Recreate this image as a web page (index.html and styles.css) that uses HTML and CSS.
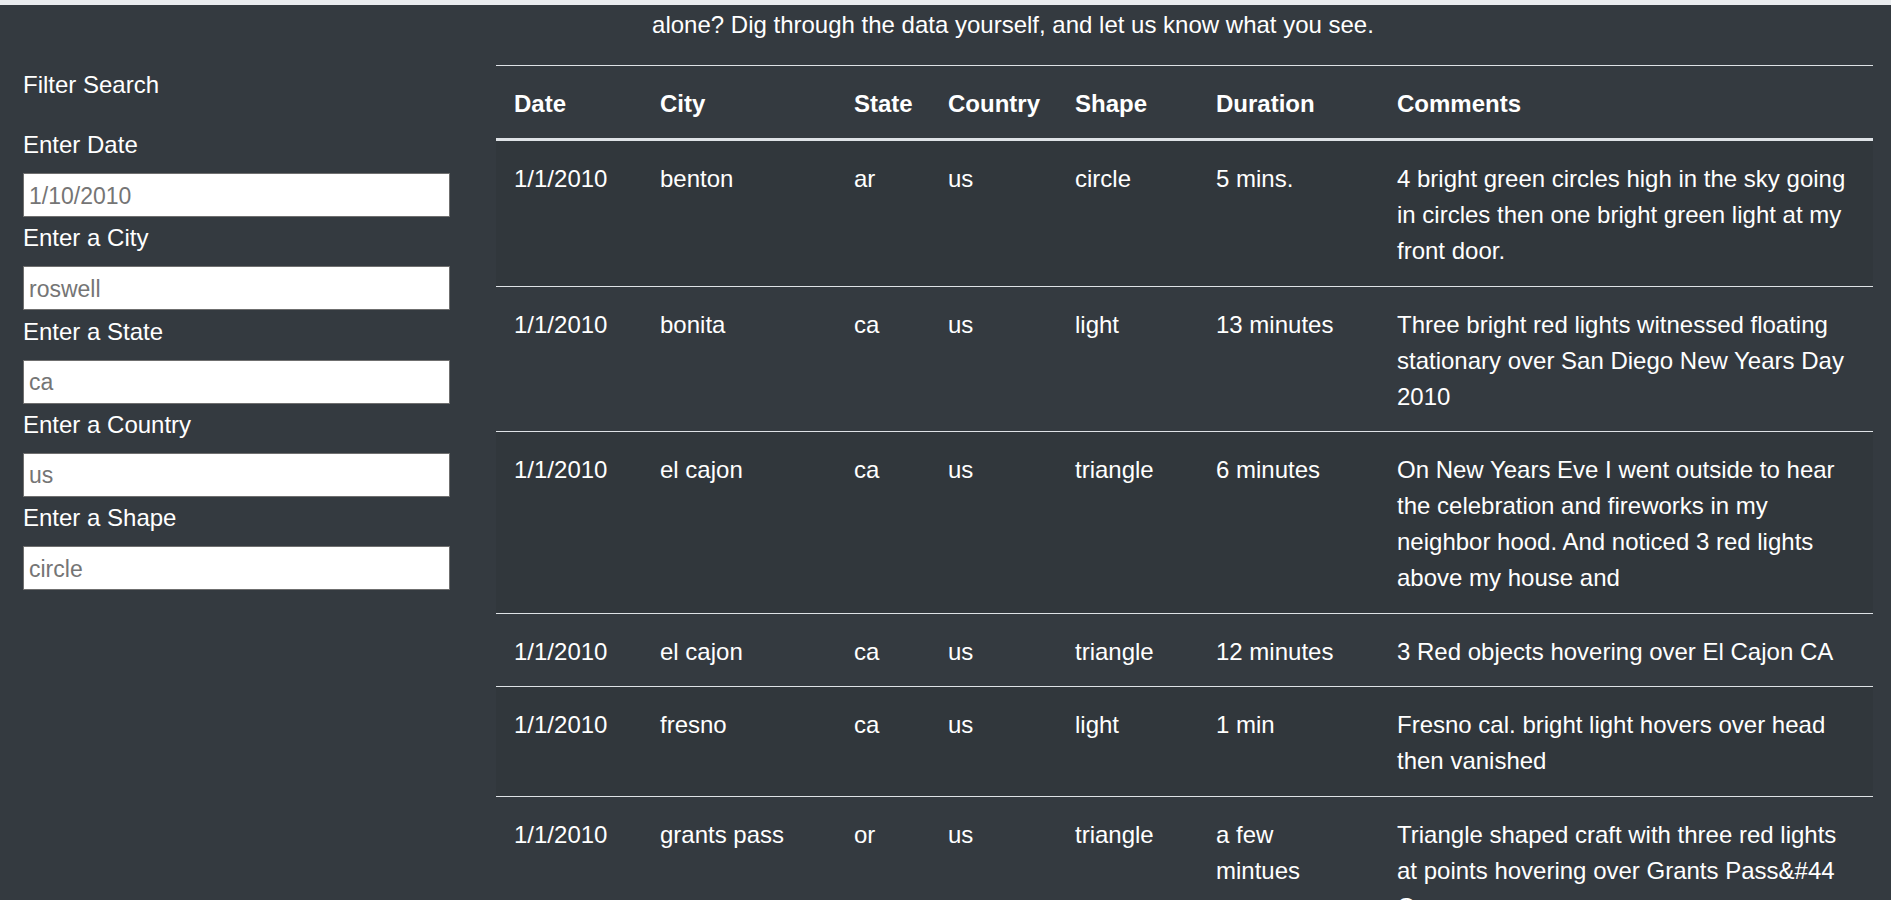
FILE: index.html
```html
<!DOCTYPE html>
<html lang="en">
<head>
<meta charset="utf-8">
<title>UFO Sightings</title>
<link rel="stylesheet" href="styles.css">
</head>
<body>
<div class="topbar"></div>
<p class="intro">alone? Dig through the data yourself, and let us know what you see.</p>
<div class="layout">
  <aside class="filters">
    <div class="filter-title">Filter Search</div>
    <form class="filter-form">
      <label class="field-label" for="datetime">Enter Date</label>
      <input class="field-input" id="datetime" type="text" placeholder="1/10/2010">
      <label class="field-label" for="city">Enter a City</label>
      <input class="field-input" id="city" type="text" placeholder="roswell">
      <label class="field-label" for="state">Enter a State</label>
      <input class="field-input" id="state" type="text" placeholder="ca">
      <label class="field-label" for="country">Enter a Country</label>
      <input class="field-input" id="country" type="text" placeholder="us">
      <label class="field-label" for="shape">Enter a Shape</label>
      <input class="field-input" id="shape" type="text" placeholder="circle">
    </form>
  </aside>
  <main class="results">
    <table class="ufo-table">
      <colgroup>
        <col class="col-date">
        <col class="col-city">
        <col class="col-state">
        <col class="col-country">
        <col class="col-shape">
        <col class="col-duration">
        <col class="col-comments">
      </colgroup>
      <thead>
        <tr>
          <th>Date</th>
          <th>City</th>
          <th>State</th>
          <th>Country</th>
          <th>Shape</th>
          <th>Duration</th>
          <th>Comments</th>
        </tr>
      </thead>
      <tbody>
        <tr>
          <td>1/1/2010</td><td>benton</td><td>ar</td><td>us</td><td>circle</td><td>5 mins.</td>
          <td>4 bright green circles high in the sky going in circles then one bright green light at my front door.</td>
        </tr>
        <tr>
          <td>1/1/2010</td><td>bonita</td><td>ca</td><td>us</td><td>light</td><td>13 minutes</td>
          <td>Three bright red lights witnessed floating stationary over San Diego New Years Day 2010</td>
        </tr>
        <tr>
          <td>1/1/2010</td><td>el cajon</td><td>ca</td><td>us</td><td>triangle</td><td>6 minutes</td>
          <td>On New Years Eve I went outside to hear the celebration and fireworks in my neighbor hood. And noticed 3 red lights above my house and</td>
        </tr>
        <tr>
          <td>1/1/2010</td><td>el cajon</td><td>ca</td><td>us</td><td>triangle</td><td>12 minutes</td>
          <td>3 Red objects hovering over El Cajon CA</td>
        </tr>
        <tr>
          <td>1/1/2010</td><td>fresno</td><td>ca</td><td>us</td><td>light</td><td>1 min</td>
          <td>Fresno cal. bright light hovers over head then vanished</td>
        </tr>
        <tr>
          <td>1/1/2010</td><td>grants pass</td><td>or</td><td>us</td><td>triangle</td><td>a few mintues</td>
          <td>Triangle shaped craft with three red lights at points hovering over Grants Pass&amp;#44 Oregon</td>
        </tr>
      </tbody>
    </table>
  </main>
</div>
</body>
</html>
```

FILE: styles.css
```css
html, body {
  margin: 0;
  padding: 0;
}

body {
  background: #343a40;
  color: #ffffff;
  font-family: "Liberation Sans", Arial, sans-serif;
  font-size: 24px;
  line-height: 36px;
  overflow: hidden;
}

.topbar {
  height: 5px;
  background: #e9ecef;
}

.intro {
  margin: 0 0 24px 0;
  padding: 2px 0 0 135px;
  height: 34px;
  text-align: center;
}

.layout {
  display: grid;
  grid-template-columns: 473px 1fr;
}

.filters {
  padding: 0 23px;
}

.filter-title {
  padding-top: 2px;
  height: 34px;
  margin-bottom: 24px;
}

.filter-form {
  display: flex;
  flex-direction: column;
}

.field-label {
  display: block;
  height: 34px;
  padding-top: 2px;
  margin-bottom: 12px;
}

.field-input {
  box-sizing: border-box;
  height: 44px;
  margin: 0 0 1.25px 0;
  padding: 2px 5px 0 5px;
  border: 1px solid #6f6f6f;
  border-radius: 0;
  background: #ffffff;
  font-family: "Liberation Sans", Arial, sans-serif;
  font-size: 23px;
  color: #333;
  outline: none;
}

.field-input::placeholder {
  color: #757575;
}

.results {
  padding: 0 18px 0 23px;
}

.ufo-table {
  width: 1377px;
  table-layout: fixed;
  border-collapse: separate;
  border-spacing: 0;
}

.col-date { width: 146px; }
.col-city { width: 194px; }
.col-state { width: 94px; }
.col-country { width: 127px; }
.col-shape { width: 141px; }
.col-duration { width: 181px; }
.col-comments { width: 494px; }

.ufo-table th,
.ufo-table td {
  text-align: left;
  vertical-align: top;
  padding: 20px 18px 16.5px 18px;
}

.ufo-table th {
  font-weight: bold;
  padding-bottom: 16px;
  border-top: 1px solid #dee2e6;
  border-bottom: 3px solid #dee2e6;
}

.ufo-table td {
  border-bottom: 1px solid #dee2e6;
}

.ufo-table tbody tr:nth-of-type(odd) {
  background-color: rgba(0, 0, 0, 0.05);
}
```
